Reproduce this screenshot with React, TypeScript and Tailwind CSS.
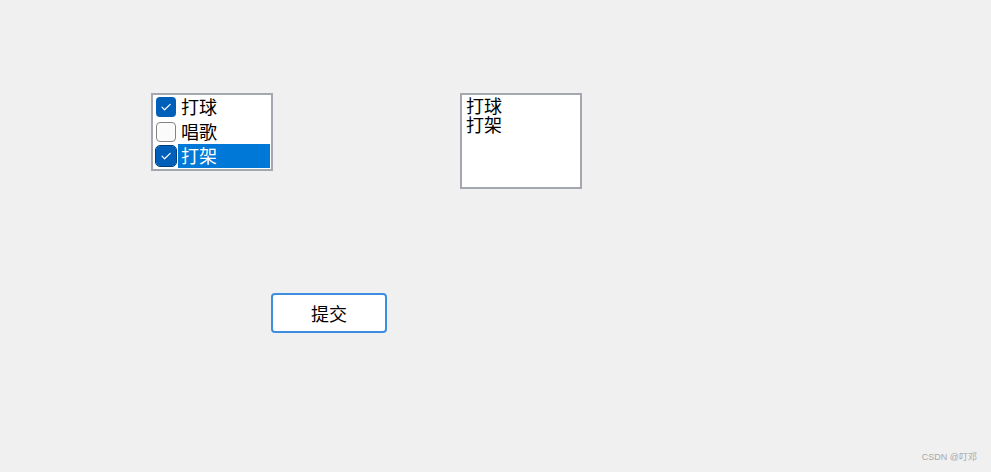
import * as React from "react"

interface Hobby {
  label: string
  checked: boolean
}

const hobbies: Hobby[] = [
  { label: "打球", checked: true },
  { label: "唱歌", checked: false },
  { label: "打架", checked: true },
]

function CheckMark() {
  return (
    <svg viewBox="0 0 20 20" className="h-[20px] w-[20px]">
      <path d="M6 10.2l2.6 2.6L14.2 7.4" fill="none" stroke="#ffffff" strokeWidth="1.2" strokeLinecap="round" strokeLinejoin="round" />
    </svg>
  )
}

function CheckedListBox() {
  const [items, setItems] = React.useState(hobbies)
  const selected = 2

  const toggle = (i: number) => {
    setItems(items.map((it, idx) => (idx === i ? { ...it, checked: !it.checked } : it)))
  }

  return (
    <div className="flex h-[78px] w-[122px] flex-col border-2 border-[#a4a7ad] bg-white pl-[2px] pr-[1px]">
      {items.map((it, i) => (
        <div key={it.label} className="flex h-[24.5px] items-center" onClick={() => toggle(i)}>
          <div className="flex w-[23px] items-center pl-[1px]">
            {it.checked ? (
              <span
                className={
                  "flex h-[20px] w-[20px] items-center justify-center rounded-[4px] bg-[#005fb8] " +
                  (i === selected ? "outline outline-1 outline-[#003e80]" : "")
                }
              >
                <CheckMark />
              </span>
            ) : (
              <span className="h-[20px] w-[20px] rounded-[4px] border-[1.5px] border-[#858585] bg-[#fbfbfb]" />
            )}
          </div>
          <div
            className={
              "flex h-[24px] flex-1 items-start pl-[3px] pt-[1px] text-[18px] leading-[20px] " +
              (i === selected ? "bg-[#0078d7] text-white" : "text-black")
            }
          >
            {it.label}
          </div>
        </div>
      ))}
    </div>
  )
}

export default function App() {
  const picked = hobbies.filter((h) => h.checked).map((h) => h.label)

  return (
    <div
      className="relative flex h-[472px] w-full flex-col bg-[#f0f0f0] pt-[93px]"
      style={{ fontFamily: '"Microsoft YaHei", "Noto Sans CJK SC", sans-serif' }}
    >
      <div className="flex items-start pl-[151px]">
        <CheckedListBox />
        <div className="ml-[187px] flex h-[96px] w-[122px] flex-col border-2 border-[#a4a7ad] bg-white px-[4px] pt-[1px] text-[18px] leading-[19px] text-black">
          {picked.map((p) => (
            <div key={p}>{p}</div>
          ))}
        </div>
      </div>

      <div className="pl-[271px] pt-[104px]">
        <button
          type="button"
          className="flex h-[40px] w-[116px] items-center justify-center rounded-[4px] border-2 border-[#3d8ee0] bg-white text-[18px] text-black"
        >
          提交
        </button>
      </div>

      <div
        className="absolute right-[14px] bottom-[8px] text-[9px] text-[#a8a8a8]"
        style={{ fontFamily: '"Liberation Sans", "Noto Sans CJK SC", sans-serif' }}
      >
        CSDN @叮邓
      </div>
    </div>
  )
}
